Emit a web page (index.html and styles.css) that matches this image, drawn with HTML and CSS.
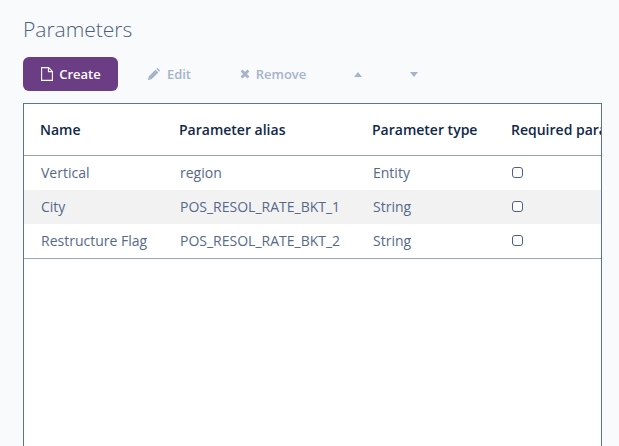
FILE: index.html
```html
<!DOCTYPE html>
<html lang="en">
<head>
<meta charset="utf-8">
<title>Parameters</title>
<link rel="stylesheet" href="styles.css">
</head>
<body>
<h1 class="title">Parameters</h1>
<div class="toolbar">
  <button class="btn btn-primary">
    <svg class="icon" viewBox="0 0 12 14"><path d="M.6.6h7l3.8 3.8v9H.6zM7.4.6v4h4" fill="none" stroke="currentColor" stroke-width="1.1"/></svg>
    Create
  </button>
  <button class="btn btn-edit">
    <svg class="icon icon-edit" viewBox="0 0 12 12"><path d="M0 12l.7-3.6L7.5 1.6l3 3-6.9 6.7zM8.4.8l.7-.7a.6.6 0 0 1 .8 0l2 2a.6.6 0 0 1 0 .8l-.7.7z" fill="currentColor"/></svg>
    Edit
  </button>
  <button class="btn btn-remove">
    <svg class="icon icon-x" viewBox="0 0 10 10"><path d="M1.6 1.6l6.8 6.8M8.4 1.6L1.6 8.4" fill="none" stroke="currentColor" stroke-width="2.8"/></svg>
    Remove
  </button>
  <button class="btn btn-arrow"><span class="tri tri-up"></span></button>
  <button class="btn btn-arrow"><span class="tri tri-down"></span></button>
</div>
<div class="panel">
  <table class="grid">
    <colgroup><col class="c1"><col class="c2"><col class="c3"><col class="c4"></colgroup>
    <thead>
      <tr><th>Name</th><th>Parameter alias</th><th>Parameter type</th><th>Required parameter</th></tr>
    </thead>
    <tbody>
      <tr><td>Vertical</td><td>region</td><td>Entity</td><td><span class="check"></span></td></tr>
      <tr class="alt"><td>City</td><td>POS_RESOL_RATE_BKT_1</td><td>String</td><td><span class="check"></span></td></tr>
      <tr><td>Restructure Flag</td><td>POS_RESOL_RATE_BKT_2</td><td>String</td><td><span class="check"></span></td></tr>
    </tbody>
  </table>
</div>
</body>
</html>
```
FILE: styles.css
```css
* { box-sizing: border-box; }
html, body { height: 100%; }
body {
  margin: 0;
  padding: 15px 17px 0 23px;
  background: #f9fafc;
  font-family: "Open Sans", "Liberation Sans", sans-serif;
  overflow: hidden;
}
.title {
  margin: 0;
  height: 42px;
  font-size: 21px;
  font-weight: 300;
  line-height: 28px;
  color: #4c5f7c;
}
.toolbar { display: flex; height: 34px; margin-bottom: 12px; }
.btn {
  display: flex;
  align-items: center;
  justify-content: center;
  gap: 6px;
  height: 34px;
  border: 0;
  padding: 0;
  background: none;
  font: 600 13px "Open Sans", sans-serif;
  color: #a6b4c9;
}
.btn-primary { width: 95px; background: #6b3d85; border-radius: 6px; color: #fff; gap: 6px; padding-left: 1px; }
.btn-edit { width: 43px; margin-left: 30px; gap: 7px; }
.btn-remove { width: 68px; margin-left: 48px; gap: 6px; }
.btn-arrow { width: 10px; margin-left: 46px; }
.icon { width: 12px; height: 14px; }
.icon-edit { width: 12px; height: 12px; }
.icon-x { width: 10px; height: 10px; }
.tri { width: 0; height: 0; border-left: 4.5px solid transparent; border-right: 4.5px solid transparent; }
.tri-up { border-bottom: 5px solid #a6b4c9; }
.tri-down { border-top: 5px solid #a6b4c9; }
.panel {
  height: 343px;
  border: 1px solid #5f7391;
  border-bottom: 0;
  background: #fff;
  overflow: hidden;
}
.grid {
  width: 640px;
  table-layout: fixed;
  border-collapse: separate;
  border-spacing: 0;
  font-size: 14px;
  white-space: nowrap;
}
.c1 { width: 139px; }
.c2 { width: 193px; }
.c3 { width: 139px; }
.c4 { width: 169px; }
th {
  height: 52px;
  padding: 0 0 0 16px;
  text-align: left;
  font-weight: 600;
  color: #10284a;
  border-bottom: 1px solid #98a4b5;
}
td {
  height: 34px;
  padding: 0 0 2px 17px;
  color: #56698a;
}
tbody tr:last-child td { height: 35px; border-bottom: 1px solid #98a8bd; }
.alt td { background: #f2f2f2; }
.check {
  display: block;
  width: 11px;
  height: 11px;
  border: 1px solid #4f5f85;
  border-radius: 3px;
  background: #fff;
}
```
